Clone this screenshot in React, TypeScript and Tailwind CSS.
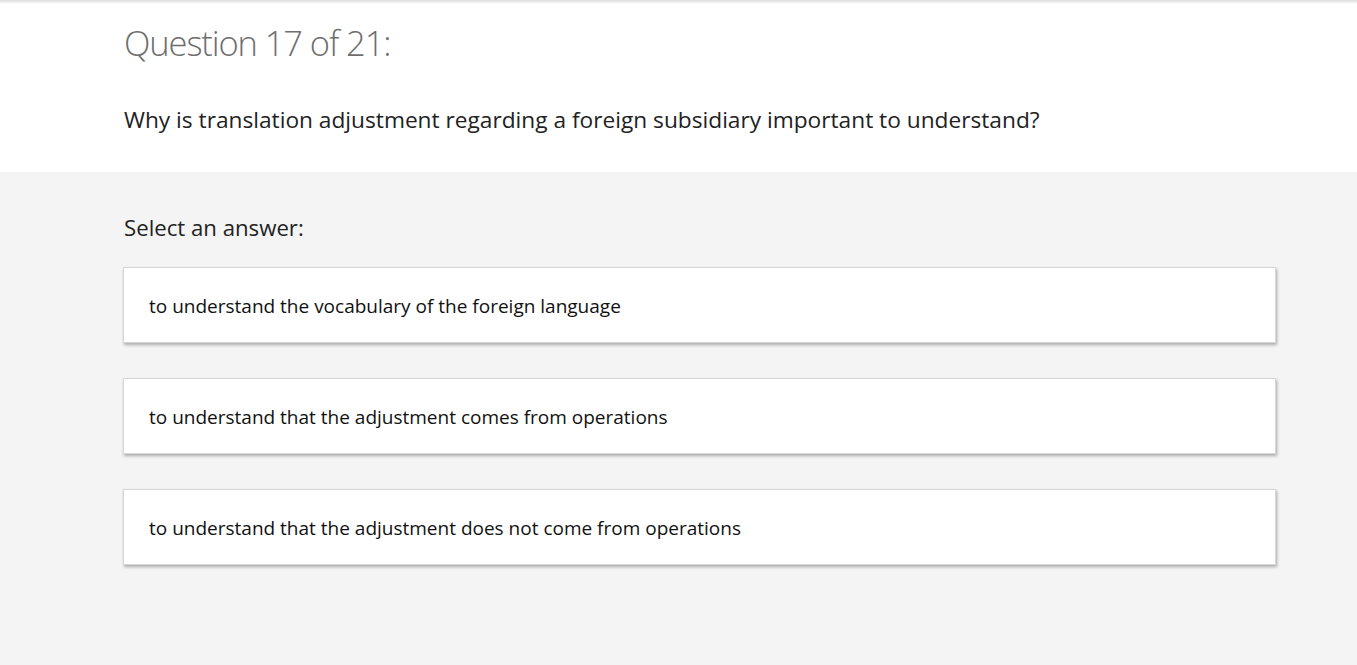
export default function App() {
  const answers = [
    "to understand the vocabulary of the foreign language",
    "to understand that the adjustment comes from operations",
    "to understand that the adjustment does not come from operations",
  ];
  return (
    <div className="min-h-[665px] w-full bg-[#f4f4f4] flex flex-col" style={{ fontFamily: '"Open Sans", "Noto Sans", sans-serif' }}>
      <div className="bg-white relative h-[172px] pl-[124px]">
        <div className="absolute left-0 right-0 top-0 h-[4px] bg-gradient-to-b from-[#dcdcdc] to-white" />
        <h1 className="pt-[20px] text-[34.5px] leading-[46px] font-light text-[#6e6e6e] tracking-[-1.1px]">Question 17 of 21:</h1>
        <p className="mt-[39px] text-[22.7px] leading-[30px] text-[#222222]">Why is translation adjustment regarding a foreign subsidiary important to understand?</p>
      </div>
      <div className="pl-[123px] pr-[81px] pt-[41px]">
        <p className="text-[22.2px] leading-[30px] text-[#222222] pl-[1px]">Select an answer:</p>
        <div className="mt-[24px] flex flex-col gap-[35px]">
          {answers.map((a) => (
            <div key={a} className="h-[76px] bg-white border border-[#d6d6d6] shadow-[1px_2px_3px_rgba(0,0,0,0.3)] flex items-center pl-[25px] pt-[3px]">
              <span className="text-[19px] text-[#111111]">{a}</span>
            </div>
          ))}
        </div>
      </div>
    </div>
  );
}
